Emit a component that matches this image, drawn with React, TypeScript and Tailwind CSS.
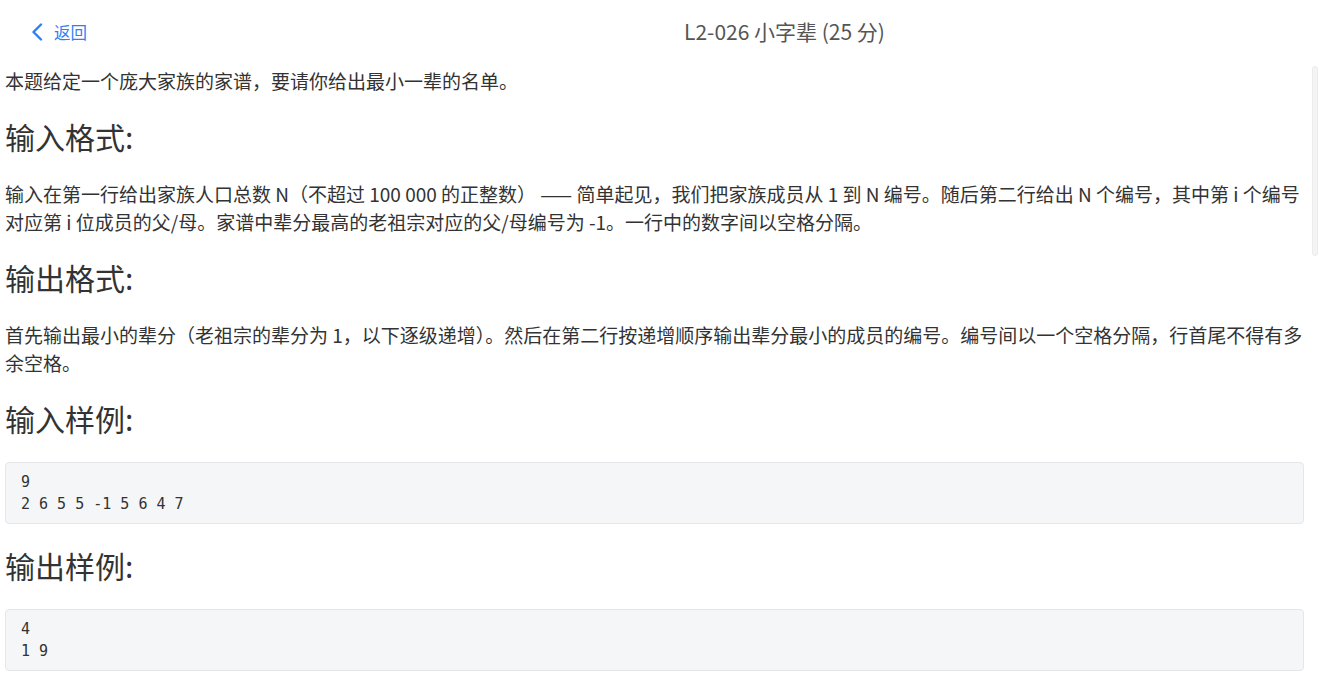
import React from 'react';

const sans = "font-['Noto_Sans_CJK_SC','Noto_Sans',sans-serif]";

const Heading: React.FC<{ children: React.ReactNode }> = ({ children }) => (
  <h2 className="mt-[21px] mb-6 text-[30px] leading-[40px] font-normal text-[#333]">{children}</h2>
);

const Code: React.FC<{ lines: string[] }> = ({ lines }) => (
  <pre className="border border-[#e4e6ea] bg-[#f5f6f8] rounded-[4px] py-2 pl-[15px] font-['DejaVu_Sans_Mono',monospace] text-[15px] leading-[22px] text-[#333]">
    {lines.join('\n')}
  </pre>
);

export default function App() {
  return (
    <div className={`relative w-[1319px] h-[693px] overflow-hidden bg-white ${sans}`}>
      <header className="h-16 flex items-center">
        <div className="w-[250px] flex items-center pl-[31px]">
          <a className="flex items-center gap-[10px] text-[#2e7ff6] text-[16.5px]">
            <svg width="13" height="18" viewBox="0 0 13 18" fill="none">
              <path d="M10 1.5 2.5 9l7.5 7.5" stroke="currentColor" strokeWidth="2.4" strokeLinecap="round" strokeLinejoin="round" />
            </svg>
            <span>返回</span>
          </a>
        </div>
        <div className="flex-1 text-center text-[21px] font-normal text-[#555]">L2-026 小字辈 (25 分)</div>
      </header>

      <main className="pl-[5px] pr-[15px] pt-[3px] text-[19px] leading-7 text-[#333]">
        <p>本题给定一个庞大家族的家谱，要请你给出最小一辈的名单。</p>

        <Heading>输入格式:</Heading>
        <p>
          输入在第一行给出家族人口总数 N（不超过 100 000 的正整数） —— 简单起见，我们把家族成员从 1 到 N 编号。随后第二行给出 N 个编号，其中第 i 个编号对应第 i 位成员的父/母。家谱中辈分最高的老祖宗对应的父/母编号为 -1。一行中的数字间以空格分隔。
        </p>

        <Heading>输出格式:</Heading>
        <p>
          首先输出最小的辈分（老祖宗的辈分为 1，以下逐级递增）。然后在第二行按递增顺序输出辈分最小的成员的编号。编号间以一个空格分隔，行首尾不得有多余空格。
        </p>

        <Heading>输入样例:</Heading>
        <Code lines={['9', '2 6 5 5 -1 5 6 4 7']} />

        <Heading>输出样例:</Heading>
        <Code lines={['4', '1 9']} />
      </main>

      <div className="absolute right-[1px] top-[66px] w-[6px] h-[190px] rounded-full bg-[#f4f4f5] border border-[#ececee]" />
    </div>
  );
}
